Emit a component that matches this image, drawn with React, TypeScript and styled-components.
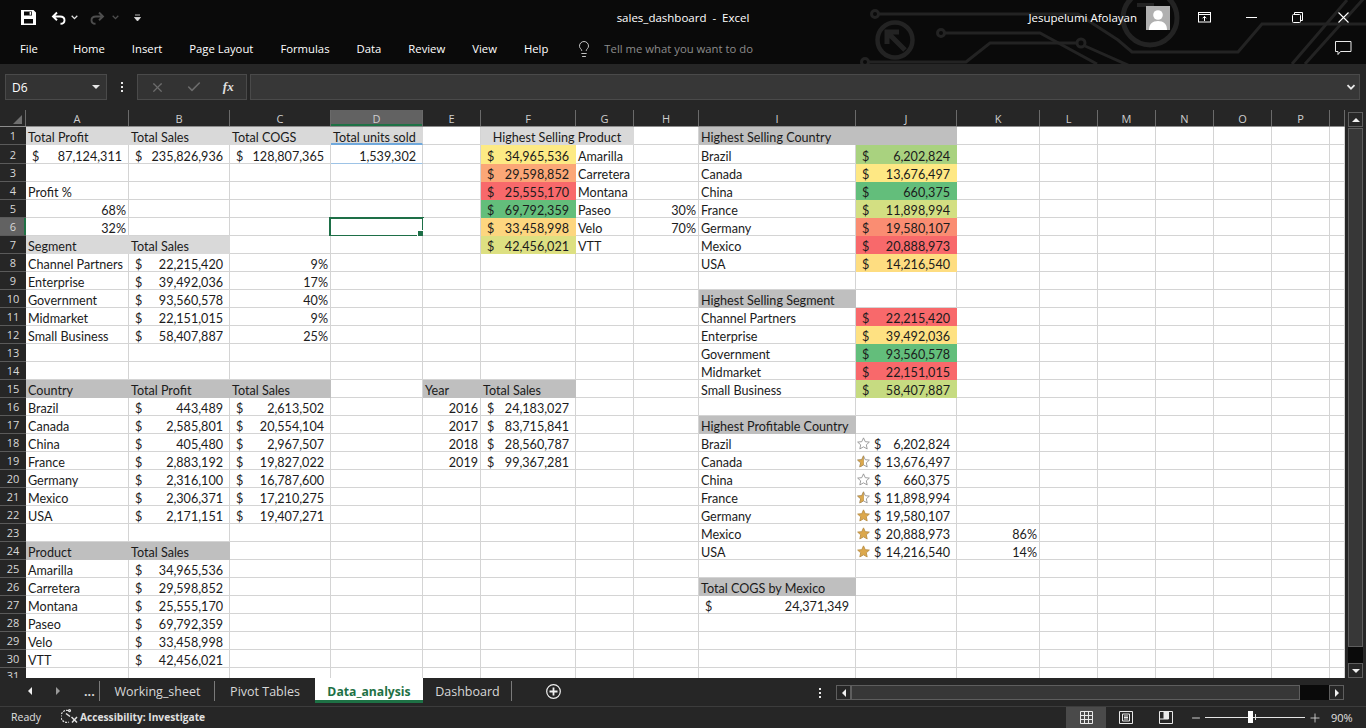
import React from "react";
import styled, { createGlobalStyle } from "styled-components";
import { Lightbulb, X, Check, Minus, Plus } from "lucide-react";

const UI_FONT = `"Open Sans", "Noto Sans", sans-serif`;
const CELL_FONT = `Lato, "Open Sans", sans-serif`;

const GlobalStyle = createGlobalStyle`
  html, body { margin: 0; padding: 0; background: #262626; }
  * { box-sizing: border-box; }
`;

const Page = styled.div`
  width: 1366px;
  height: 728px;
  display: flex;
  flex-direction: column;
  overflow: hidden;
  background: #262626;
  font-family: ${UI_FONT};
  color: #fff;
`;

/* ---------- title + menu ---------- */
const Header = styled.header`
  position: relative;
  height: 64px;
  flex: none;
  background: #0a0a0a;
`;
const CircuitArt = styled.svg`
  position: absolute;
  left: 0;
  top: 0;
  width: 1366px;
  height: 64px;
`;
const TitleBar = styled.div`
  position: relative;
  height: 35px;
  display: grid;
  grid-template-columns: 1fr auto 1fr;
  align-items: center;
`;
const QuickAccess = styled.div`
  display: flex;
  align-items: center;
  padding-left: 21px;
`;
const QuickIcon = styled.svg<{ $gap?: number }>`
  display: block;
  margin-left: ${(p) => p.$gap ?? 0}px;
`;
const DocTitle = styled.div`
  font-size: 11.5px;
  white-space: pre;
`;
const WindowControls = styled.div`
  display: flex;
  align-items: center;
  justify-content: flex-end;
`;
const UserName = styled.div`
  font-size: 11.5px;
  margin-right: 9px;
`;
const Avatar = styled.svg`
  display: block;
  margin-right: 12px;
`;
const WindowButton = styled.div`
  width: 46px;
  height: 30px;
  display: flex;
  align-items: center;
  justify-content: center;
`;
const MenuBar = styled.nav`
  position: relative;
  height: 29px;
  display: flex;
  align-items: center;
  padding: 0 0 2px 20px;
  gap: 27px;
  font-size: 11.3px;
`;
const MenuItem = styled.span<{ $after?: number }>`
  margin-right: ${(p) => p.$after ?? 0}px;
`;
const TellMe = styled.div`
  display: flex;
  align-items: center;
  gap: 11px;
  color: #8c8c8c;
  svg { color: #d8d8d8; }
`;
const CommentIcon = styled.svg`
  margin-left: auto;
  margin-right: 14px;
`;

/* ---------- formula bar ---------- */
const FormulaBar = styled.div`
  height: 46px;
  flex: none;
  display: flex;
  align-items: center;
  padding: 0 6px 0 5px;
`;
const FormulaBox = styled.div`
  height: 26px;
  background: #333;
  border: 1px solid #4a4a4a;
  display: flex;
  align-items: center;
`;
const NameBox = styled(FormulaBox)`
  width: 102px;
  padding: 0 6px;
  justify-content: space-between;
  font-size: 12px;
`;
const Caret = styled.i`
  width: 0;
  height: 0;
  border-left: 4px solid transparent;
  border-right: 4px solid transparent;
  border-top: 4px solid #e6e6e6;
`;
const VDots = styled.div`
  width: 30px;
  display: flex;
  flex-direction: column;
  align-items: center;
  gap: 2px;
  i { width: 2px; height: 2px; background: #e8e8e8; }
`;
const FxGroup = styled(FormulaBox)`
  width: 110px;
  margin-right: 3px;
  justify-content: space-around;
  padding: 0 2px;
  color: #6c6c6c;
`;
const FxLabel = styled.span`
  font-family: "Liberation Serif", serif;
  font-style: italic;
  font-weight: 700;
  font-size: 13px;
  color: #e0e0e0;
`;
const FormulaInput = styled(FormulaBox)`
  flex: 1;
  background: #373737;
  justify-content: flex-end;
  padding-right: 3px;
`;

/* ---------- sheet ---------- */
const SheetArea = styled.div`
  height: 568px;
  flex: none;
  display: flex;
`;
const Sheet = styled.div`
  width: 1345px;
  flex: none;
  overflow: hidden;
  font-family: ${CELL_FONT};
`;
const COLUMNS = "26px 103px 101px 101px 92px 58px 95px 58px 65px 157px 101px 83px 58px 58px 58px 58px 58px 15px";

const HeaderRow = styled.div`
  display: grid;
  grid-template-columns: ${COLUMNS};
  height: 17px;
  background: #262626;
  border-bottom: 1px solid #8c8c8c;
`;
const CornerCell = styled.div`
  position: relative;
  border-right: 1px solid #6a6a6a;
  &::after {
    content: "";
    position: absolute;
    right: 3px;
    bottom: 2px;
    border-left: 9px solid transparent;
    border-bottom: 9px solid #6f6f6f;
  }
`;
const ColHead = styled.div<{ $active?: boolean }>`
  display: flex;
  align-items: center;
  justify-content: center;
  font-family: ${UI_FONT};
  font-size: 11px;
  color: #cfcfcf;
  border-right: 1px solid #6a6a6a;
  background: ${(p) => (p.$active ? "#626262" : "transparent")};
  box-shadow: ${(p) => (p.$active ? "inset 0 -2px 0 #1e7145" : "none")};
`;
/* the last row is cut by the bottom of the sheet, its track stays taller than its box */
const GridRow = styled.div<{ $h: number }>`
  display: grid;
  grid-template-columns: ${COLUMNS};
  grid-template-rows: ${(p) => Math.max(p.$h, 15)}px;
  height: ${(p) => p.$h}px;
`;
const RowHead = styled.div<{ $active?: boolean }>`
  display: flex;
  align-items: center;
  justify-content: center;
  font-family: ${UI_FONT};
  font-size: 11px;
  color: #d8d8d8;
  background: ${(p) => (p.$active ? "#626262" : "#262626")};
  border-bottom: 1px solid #5a5a5a;
  box-shadow: ${(p) => (p.$active ? "inset -2px 0 0 #1e7145" : "none")};
`;
const SheetCell = styled.div<{
  $span?: number;
  $fill?: string;
  $align?: string;
  $mark?: boolean;
  $markLight?: boolean;
  $inset?: number;
}>`
  position: relative;
  grid-column: span ${(p) => p.$span ?? 1};
  display: flex;
  align-items: center;
  justify-content: ${(p) => p.$align ?? "flex-start"};
  padding: 4px ${(p) => p.$inset ?? 2}px 0 2px;
  min-width: 0;
  min-height: 0;
  white-space: nowrap;
  font-size: 12.6px;
  line-height: 13px;
  color: #1b1b1b;
  background: ${(p) => p.$fill ?? "#fff"};
  border-right: 1px solid ${(p) => p.$fill ?? "#d4d4d4"};
  border-bottom: ${(p) =>
    p.$mark
      ? "2px solid #6fa8dc"
      : p.$markLight
        ? "1px solid #9dc3e6"
        : `1px solid ${p.$fill ?? "#d4d4d4"}`};
`;
const Money = styled.div`
  flex: 1;
  display: flex;
  justify-content: space-between;
  padding: 0 4px 0 4px;
`;
const StarIcon = styled.svg`
  flex: none;
  margin-left: -1px;
  margin-top: -3px;
`;
const Selection = styled.div`
  position: absolute;
  left: -2px;
  top: -1px;
  right: -2px;
  bottom: -2px;
  border: 2px solid #1e6f47;
  &::after {
    content: "";
    position: absolute;
    right: -3px;
    bottom: -3px;
    width: 6px;
    height: 6px;
    background: #1e6f47;
    border: 1px solid #fff;
  }
`;

/* ---------- scrollbars ---------- */
const VScroll = styled.div`
  flex: 1;
  padding: 2px 3px 0 3px;
  display: flex;
  flex-direction: column;
`;
const ScrollButton = styled.div`
  flex: none;
  width: 15px;
  height: 15px;
  border: 1px solid #5e5e5e;
  display: flex;
  align-items: center;
  justify-content: center;
`;
const ArrowUp = styled.i`
  border-left: 4px solid transparent;
  border-right: 4px solid transparent;
  border-bottom: 4px solid #f0f0f0;
`;
const ArrowDown = styled.i`
  border-left: 4px solid transparent;
  border-right: 4px solid transparent;
  border-top: 4px solid #f0f0f0;
`;
const ArrowLeft = styled.i<{ $color?: string }>`
  border-top: 4px solid transparent;
  border-bottom: 4px solid transparent;
  border-right: 4px solid ${(p) => p.$color ?? "#f0f0f0"};
`;
const ArrowRight = styled.i<{ $color?: string }>`
  border-top: 4px solid transparent;
  border-bottom: 4px solid transparent;
  border-left: 4px solid ${(p) => p.$color ?? "#f0f0f0"};
`;
const VThumb = styled.div`
  flex: none;
  height: 519px;
  background: #373737;
  border: 1px solid #5e5e5e;
  margin-top: 1px;
`;
const VGap = styled.div`
  flex: 1;
  background: #0a0a0a;
`;

/* ---------- tabs ---------- */
const TabBar = styled.div`
  height: 28px;
  flex: none;
  display: flex;
  align-items: flex-start;
  font-size: 12.5px;
  color: #d8d8d8;
`;
const TabNav = styled.div`
  width: 100px;
  height: 20px;
  display: flex;
  align-items: center;
  padding-left: 28px;
  gap: 24px;
  border-right: 1px solid #7a7a7a;
  margin-top: 3px;
`;
const Ellipsis = styled.span`
  font-weight: 700;
`;
const Tab = styled.div<{ $active?: boolean; $w: number; $sep?: boolean }>`
  width: ${(p) => p.$w}px;
  height: 25px;
  padding-top: ${(p) => (p.$active ? 4 : 2)}px;
  display: flex;
  align-items: center;
  justify-content: center;
  position: relative;
  color: ${(p) => (p.$active ? "#1e7145" : "#d8d8d8")};
  font-weight: ${(p) => (p.$active ? 700 : 400)};
  font-size: ${(p) => (p.$active ? 12.2 : 12.5)}px;
  background: ${(p) => (p.$active ? "#fff" : "transparent")};
  border-bottom: ${(p) => (p.$active ? "3px solid #1e7145" : "none")};
  &::after {
    content: "";
    display: ${(p) => (p.$sep ? "block" : "none")};
    position: absolute;
    right: 0;
    top: 3px;
    height: 20px;
    width: 1px;
    background: #7a7a7a;
  }
`;
const AddSheet = styled.svg`
  margin-left: 34px;
  margin-top: 6px;
`;
const TabRight = styled.div`
  margin-left: auto;
  display: flex;
  align-items: center;
  padding: 7px 22px 0 0;
`;
const HDots = styled(VDots)`
  width: 16px;
  margin-right: 8px;
`;
const HBar = styled.div`
  width: 508px;
  height: 15px;
  display: flex;
`;
const HThumb = styled.div`
  width: 449px;
  background: #373737;
  border: 1px solid #5e5e5e;
`;
const HGap = styled.div`
  flex: 1;
  background: #0a0a0a;
`;

/* ---------- status ---------- */
const StatusBar = styled.footer`
  height: 22px;
  flex: none;
  display: flex;
  align-items: center;
  font-size: 10.5px;
  color: #e0e0e0;
  border-top: 1px solid #3c3c3c;
  padding-left: 11px;
`;
const ReadyText = styled.span`
  width: 50px;
  margin-bottom: 2px;
`;
const Investigate = styled.span`
  display: flex;
  align-items: center;
  gap: 1px;
  font-weight: 700;
  font-size: 10.2px;
  margin-bottom: 2px;
`;
const ViewButton = styled.div<{ $active?: boolean }>`
  width: 40px;
  height: 21px;
  display: flex;
  align-items: center;
  justify-content: center;
  background: ${(p) => (p.$active ? "#4a4a4a" : "transparent")};
`;
const ViewButtons = styled.div`
  margin-left: auto;
  display: flex;
  margin-right: 4px;
`;
const Zoomer = styled.div`
  display: flex;
  align-items: center;
  gap: 3px;
  margin-right: 9px;
`;
const SliderTrack = styled.div`
  position: relative;
  width: 100px;
  height: 1px;
  background: #e6e6e6;
`;
const SliderThumb = styled.i`
  position: absolute;
  left: 43px;
  top: -6px;
  width: 5px;
  height: 12px;
  background: #fff;
`;
const SliderTick = styled.i`
  position: absolute;
  left: 50px;
  top: -3px;
  width: 1px;
  height: 6px;
  background: #e6e6e6;
`;
const ZoomText = styled.span`
  width: 35px;
  font-size: 11px;
  margin-bottom: 1px;
`;

/* ---------- data ---------- */
const LETTERS = ["A", "B", "C", "D", "E", "F", "G", "H", "I", "J", "K", "L", "M", "N", "O", "P", ""];
const LIGHT = "#d9d9d9";
const DARK = "#bfbfbf";

type Cell = {
  text?: string;
  money?: string;
  right?: boolean;
  center?: boolean;
  fill?: string;
  span?: number;
  star?: "empty" | "half" | "full";
  mark?: boolean;
  markLight?: boolean;
  selected?: boolean;
  inset?: number;
};

const cells: Record<string, Cell> = {
  A1: { text: "Total Profit", fill: LIGHT },
  B1: { text: "Total Sales", fill: LIGHT },
  C1: { text: "Total COGS", fill: LIGHT },
  D1: { text: "Total units sold", fill: LIGHT, mark: true },
  F1: { text: "Highest Selling Product", fill: LIGHT, span: 2, center: true },
  I1: { text: "Highest Selling Country", fill: DARK, span: 2 },
  A2: { money: "87,124,311" },
  B2: { money: "235,826,936" },
  C2: { money: "128,807,365" },
  D2: { text: "1,539,302", right: true, markLight: true, inset: 6 },
  A4: { text: "Profit %" },
  A5: { text: "68%", right: true },
  A6: { text: "32%", right: true },
  D6: { selected: true },
  H5: { text: "30%", right: true },
  H6: { text: "70%", right: true },
  A7: { text: "Segment", fill: LIGHT },
  B7: { text: "Total Sales", fill: LIGHT },
  I10: { text: "Highest  Selling Segment", fill: DARK },
  I17: { text: "Highest Profitable Country", fill: DARK },
  I26: { text: "Total COGS by Mexico", fill: DARK },
  I27: { money: "24,371,349" },
  K23: { text: "86%", right: true },
  K24: { text: "14%", right: true },
  A15: { text: "Country", fill: DARK },
  B15: { text: "Total Profit", fill: DARK },
  C15: { text: "Total Sales", fill: DARK },
  E15: { text: "Year", fill: DARK },
  F15: { text: "Total Sales", fill: DARK },
  A24: { text: "Product", fill: DARK },
  B24: { text: "Total Sales", fill: DARK },
};

const fillColumn = (
  col: string,
  start: number,
  values: string[],
  make: (v: string, i: number) => Cell,
) => values.forEach((v, i) => (cells[`${col}${start + i}`] = make(v, i)));
const plain = (v: string): Cell => ({ text: v });
const money = (v: string): Cell => ({ money: v });

const segments = ["Channel Partners", "Enterprise", "Government", "Midmarket", "Small Business"];
const segmentSales = ["22,215,420", "39,492,036", "93,560,578", "22,151,015", "58,407,887"];
const countries = ["Brazil", "Canada", "China", "France", "Germany", "Mexico", "USA"];
const products = ["Amarilla", "Carretera", "Montana", "Paseo", "Velo", "VTT"];
const productSales = ["34,965,536", "29,598,852", "25,555,170", "69,792,359", "33,458,998", "42,456,021"];
const countrySales = ["6,202,824", "13,676,497", "660,375", "11,898,994", "19,580,107", "20,888,973", "14,216,540"];

fillColumn("A", 8, segments, plain);
fillColumn("B", 8, segmentSales, money);
fillColumn("C", 8, ["9%", "17%", "40%", "9%", "25%"], (v) => ({ text: v, right: true }));
fillColumn("A", 16, countries, plain);
fillColumn("B", 16, ["443,489", "2,585,801", "405,480", "2,883,192", "2,316,100", "2,306,371", "2,171,151"], money);
fillColumn("C", 16, ["2,613,502", "20,554,104", "2,967,507", "19,827,022", "16,787,600", "17,210,275", "19,407,271"], money);
fillColumn("A", 25, products, plain);
fillColumn("B", 25, productSales, money);
fillColumn("E", 16, ["2016", "2017", "2018", "2019"], (v) => ({ text: v, right: true }));
fillColumn("F", 16, ["24,183,027", "83,715,841", "28,560,787", "99,367,281"], money);

const productFills = ["#fdea84", "#fba777", "#f8696b", "#63be7b", "#fdd67f", "#dde082"];
fillColumn("F", 2, productSales, (v, i) => ({ money: v, fill: productFills[i] }));
fillColumn("G", 2, products, plain);

const countryFills = ["#a9d27f", "#fee884", "#63be7b", "#d3df82", "#fa8d72", "#f8696b", "#fedd81"];
fillColumn("I", 2, countries, plain);
fillColumn("J", 2, countrySales, (v, i) => ({ money: v, fill: countryFills[i] }));

const segmentFills = ["#f8696b", "#fee182", "#63be7b", "#f8696b", "#c6db81"];
fillColumn("I", 11, segments, plain);
fillColumn("J", 11, segmentSales, (v, i) => ({ money: v, fill: segmentFills[i] }));

const stars: Cell["star"][] = ["empty", "half", "empty", "half", "full", "full", "full"];
fillColumn("I", 18, countries, plain);
fillColumn("J", 18, countrySales, (v, i) => ({ money: v, star: stars[i] }));

const rowHeight = (n: number) => (n === 2 ? 19 : n === 31 ? 10 : 18);

/* ---------- drawings ---------- */
const STAR = "6,0.8 7.6,4.3 11.4,4.7 8.6,7.2 9.4,11 6,9.1 2.6,11 3.4,7.2 0.6,4.7 4.4,4.3";
const Star = ({ kind }: { kind: "empty" | "half" | "full" }) => (
  <StarIcon width="13" height="13" viewBox="0 0 12 12">
    {kind === "full" && <polygon points={STAR} fill="#dca84c" stroke="#b78c42" strokeWidth="0.8" />}
    {kind !== "full" && <polygon points={STAR} fill="#fff" stroke="#8f8f8f" strokeWidth="0.8" />}
    {kind === "half" && (
      <polygon points="6,0.8 4.4,4.3 0.6,4.7 3.4,7.2 2.6,11 6,9.1" fill="#dca84c" stroke="#b78c42" strokeWidth="0.6" />
    )}
  </StarIcon>
);

const Circuit = () => (
  <CircuitArt viewBox="0 0 1366 64" fill="none" stroke="#232323" strokeWidth="3">
    <circle cx="875" cy="14" r="3.5" />
    <path d="M879 14H1078L1118 40 1132 52H1238L1262 24H1366" />
    <circle cx="941" cy="33" r="3.5" />
    <path d="M945 33H1040L1097 64" />
    <circle cx="865" cy="62" r="3.5" />
    <path d="M869 62H966L990 43H1077M1085 46L1130 66" />
    <circle cx="1081" cy="43" r="4" />
    <circle cx="895" cy="40" r="17.5" strokeWidth="4.5" />
    <path d="M888 33L905 50M887 44V32H899" strokeWidth="5" />
    <circle cx="1150" cy="18" r="27" strokeWidth="5" />
    <path d="M1137 5H1152V20" strokeWidth="4" />
    <path d="M1292 64L1347 0M1305 64L1366 -4" />
  </CircuitArt>
);

const Save = () => (
  <QuickIcon width="15" height="15" viewBox="0 0 15 15">
    <path fillRule="evenodd" fill="#fff" d="M0 0H12.5L15 2.5V15H0ZM3 1.5V5.5H11V1.5ZM3 9V13.5H12V9Z" />
    <rect x="8.6" y="2" width="1.6" height="2.8" fill="#fff" />
  </QuickIcon>
);
const Undo = ({ dim, flip, gap }: { dim?: boolean; flip?: boolean; gap: number }) => (
  <QuickIcon $gap={gap} width="15" height="14" viewBox="0 0 15 14" style={flip ? { transform: "scaleX(-1)" } : undefined}>
    <path
      d="M6 1.5L2 5.5L6 9.2M2.4 5.5H9C11.6 5.5 13.5 7 13.5 9.2C13.5 11.2 11.8 12.7 9.5 12.7"
      fill="none"
      stroke={dim ? "#4e4e4e" : "#fff"}
      strokeWidth="1.9"
    />
  </QuickIcon>
);
const Chevron = ({ dim, gap }: { dim?: boolean; gap: number }) => (
  <QuickIcon $gap={gap} width="7" height="5" viewBox="0 0 7 5">
    <path d="M0.7 0.8L3.5 3.6L6.3 0.8" fill="none" stroke={dim ? "#4e4e4e" : "#e0e0e0"} strokeWidth="1.3" />
  </QuickIcon>
);

const App = () => (
  <Page>
    <GlobalStyle />
    <Header>
      <Circuit />
      <TitleBar>
        <QuickAccess>
          <Save />
          <Undo gap={15} />
          <Chevron gap={5} />
          <Undo dim flip gap={12} />
          <Chevron dim gap={7} />
          <QuickIcon $gap={15} width="7" height="8" viewBox="0 0 7 8">
            <path d="M1 1H6M0.5 3.5H6.5L3.5 7Z" fill="#e0e0e0" stroke="#e0e0e0" strokeWidth="0.8" />
          </QuickIcon>
        </QuickAccess>
        <DocTitle>sales_dashboard  -  Excel</DocTitle>
        <WindowControls>
          <UserName>Jesupelumi Afolayan</UserName>
          <Avatar width="24" height="24" viewBox="0 0 24 24">
            <rect width="24" height="24" fill="#b0b0b0" />
            <circle cx="12" cy="9" r="4.8" fill="#fff" />
            <path d="M3 24C3 18 6.5 15 12 15S21 18 21 24Z" fill="#fff" />
          </Avatar>
          <WindowButton>
            <svg width="14" height="11" viewBox="0 0 14 11" fill="none" stroke="#fff">
              <rect x="0.5" y="0.5" width="12" height="9.5" />
              <path d="M0.5 2.5H12.5M6.5 9V4.5M4.6 6.3L6.5 4.4L8.4 6.3" />
            </svg>
          </WindowButton>
          <WindowButton>
            <svg width="11" height="2" viewBox="0 0 11 2"><rect width="11" height="1" fill="#fff" /></svg>
          </WindowButton>
          <WindowButton>
            <svg width="11" height="11" viewBox="0 0 11 11" fill="none" stroke="#fff">
              <rect x="0.5" y="2.5" width="8" height="8" rx="1" />
              <path d="M2.5 2.5V0.5H10.5V8.5H8.5" />
            </svg>
          </WindowButton>
          <WindowButton>
            <svg width="11" height="11" viewBox="0 0 11 11" stroke="#fff" strokeWidth="1.1">
              <path d="M0.5 0.5L10.5 10.5M10.5 0.5L0.5 10.5" />
            </svg>
          </WindowButton>
        </WindowControls>
      </TitleBar>
      <MenuBar>
        <MenuItem $after={8}>File</MenuItem>
        <MenuItem>Home</MenuItem>
        <MenuItem>Insert</MenuItem>
        <MenuItem>Page Layout</MenuItem>
        <MenuItem>Formulas</MenuItem>
        <MenuItem>Data</MenuItem>
        <MenuItem>Review</MenuItem>
        <MenuItem>View</MenuItem>
        <MenuItem>Help</MenuItem>
        <TellMe>
          <Lightbulb size={18} strokeWidth={1.2} />
          Tell me what you want to do
        </TellMe>
        <CommentIcon width="17" height="15" viewBox="0 0 17 15" fill="none" stroke="#e8e8e8">
          <path d="M0.5 0.5H16V10.5H5.5L3 13.5V10.5H0.5Z" />
        </CommentIcon>
      </MenuBar>
    </Header>

    <FormulaBar>
      <NameBox>
        D6
        <Caret />
      </NameBox>
      <VDots>
        <i />
        <i />
        <i />
      </VDots>
      <FxGroup>
        <X size={15} strokeWidth={2} />
        <Check size={16} strokeWidth={2.4} />
        <FxLabel>fx</FxLabel>
      </FxGroup>
      <FormulaInput>
        <svg width="10" height="7" viewBox="0 0 10 7">
          <path d="M1.5 1.2L5 4.7L8.5 1.2" fill="none" stroke="#e8e8e8" strokeWidth="1.8" />
        </svg>
      </FormulaInput>
    </FormulaBar>

    <SheetArea>
      <Sheet>
        <HeaderRow>
          <CornerCell />
          {LETTERS.map((l, i) => (
            <ColHead key={i} $active={l === "D"}>
              {l}
            </ColHead>
          ))}
        </HeaderRow>
        {Array.from({ length: 31 }, (_, r) => {
          const n = r + 1;
          const row: React.ReactNode[] = [];
          for (let c = 0; c < LETTERS.length; c++) {
            const id = `${LETTERS[c]}${n}`;
            const cell = cells[id] ?? {};
            row.push(
              <SheetCell
                key={id}
                $span={cell.span}
                $fill={cell.fill}
                $mark={cell.mark}
                $markLight={cell.markLight}
                $inset={cell.inset}
                $align={cell.right ? "flex-end" : cell.center ? "center" : undefined}
              >
                {cell.star && <Star kind={cell.star} />}
                {cell.money ? (
                  <Money>
                    <span>$</span>
                    <span>{cell.money}</span>
                  </Money>
                ) : (
                  cell.text
                )}
                {cell.selected && <Selection />}
              </SheetCell>,
            );
            if (cell.span) c += cell.span - 1;
          }
          return (
            <GridRow key={n} $h={rowHeight(n)}>
              <RowHead $active={n === 6}>{n}</RowHead>
              {row}
            </GridRow>
          );
        })}
      </Sheet>
      <VScroll>
        <ScrollButton>
          <ArrowUp />
        </ScrollButton>
        <VThumb />
        <VGap />
        <ScrollButton>
          <ArrowDown />
        </ScrollButton>
      </VScroll>
    </SheetArea>

    <TabBar>
      <TabNav>
        <ArrowLeft />
        <ArrowRight $color="#9a9a9a" />
        <Ellipsis>...</Ellipsis>
      </TabNav>
      <Tab $w={115} $sep>Working_sheet</Tab>
      <Tab $w={100}>Pivot Tables</Tab>
      <Tab $w={108} $active>Data_analysis</Tab>
      <Tab $w={89} $sep>Dashboard</Tab>
      <AddSheet width="15" height="15" viewBox="0 0 15 15" fill="none" stroke="#f0f0f0">
        <circle cx="7.5" cy="7.5" r="6.8" strokeWidth="1.2" />
        <path d="M7.5 3.5V11.5M3.5 7.5H11.5" strokeWidth="1.8" />
      </AddSheet>
      <TabRight>
        <HDots>
          <i />
          <i />
          <i />
        </HDots>
        <HBar>
          <ScrollButton>
            <ArrowLeft />
          </ScrollButton>
          <HThumb />
          <HGap />
          <ScrollButton>
            <ArrowRight />
          </ScrollButton>
        </HBar>
      </TabRight>
    </TabBar>

    <StatusBar>
      <ReadyText>Ready</ReadyText>
      <Investigate>
        <svg width="18" height="15" viewBox="0 0 18 15" fill="none" stroke="#e0e0e0" strokeWidth="1.2">
          <path d="M7 1.5A6 6 0 1 0 8 13" strokeDasharray="2 1" />
          <circle cx="8.5" cy="1.6" r="1" />
          <path d="M5 4.5L9 7.5M11 13.5L16 8M10.5 8L16 13.5" strokeWidth="1.5" />
        </svg>
        Accessibility: Investigate
      </Investigate>
      <ViewButtons>
        <ViewButton $active>
          <svg width="13" height="13" viewBox="0 0 13 13" fill="none" stroke="#e8e8e8">
            <path d="M0.5 0.5H12.5V12.5H0.5ZM4.5 0.5V12.5M8.5 0.5V12.5M0.5 4.5H12.5M0.5 8.5H12.5" />
          </svg>
        </ViewButton>
        <ViewButton>
          <svg width="14" height="13" viewBox="0 0 14 13" fill="none" stroke="#e8e8e8">
            <path d="M0.5 0.5H13.5V12.5H0.5ZM3.5 3H10.5V10H3.5ZM5 5H9M5 6.5H9M5 8H9" />
          </svg>
        </ViewButton>
        <ViewButton>
          <svg width="14" height="13" viewBox="0 0 14 13" fill="none" stroke="#e8e8e8">
            <path d="M0.5 0.5H13.5V12.5H0.5Z" />
            <path d="M5 0.5H9.5V8H5ZM1 8H5" fill="#e8e8e8" />
          </svg>
        </ViewButton>
      </ViewButtons>
      <Zoomer>
        <Minus size={12} strokeWidth={1.8} />
        <SliderTrack>
          <SliderThumb />
          <SliderTick />
        </SliderTrack>
        <Plus size={14} strokeWidth={1.4} />
      </Zoomer>
      <ZoomText>90%</ZoomText>
    </StatusBar>
  </Page>
);

export default App;
